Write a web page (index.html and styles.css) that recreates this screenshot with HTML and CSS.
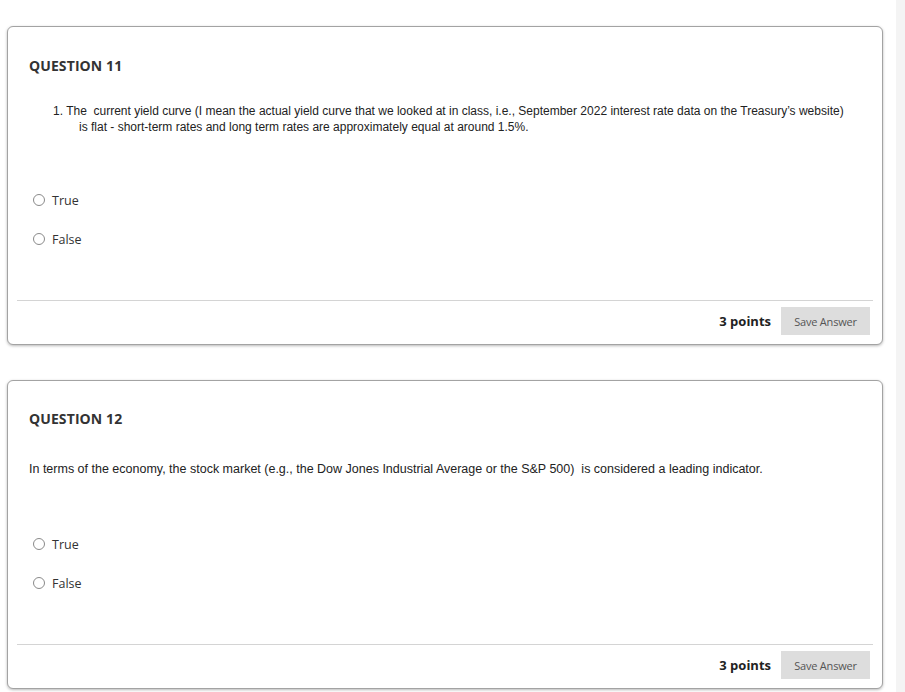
FILE: index.html
```html
<!DOCTYPE html>
<html>
<head>
<meta charset="utf-8">
<link rel="stylesheet" href="styles.css">
</head>
<body>
<div class="page">
  <div class="content">
    <div class="card card-first">
      <h3 class="qtitle">QUESTION 11</h3>
      <p class="qtext qtext-list">1. The&nbsp; current yield curve (I mean the actual yield curve that we looked at in class, i.e., September 2022 interest rate data on the Treasury’s website) is flat - short-term rates and long term rates are approximately equal at around 1.5%.</p>
      <div class="answers">
        <label class="answer"><span class="radio"></span>True</label>
        <label class="answer"><span class="radio"></span>False</label>
      </div>
      <div class="footer">
        <span class="points">3 points</span>
        <span class="save">Save Answer</span>
      </div>
    </div>
    <div class="card card-second">
      <h3 class="qtitle">QUESTION 12</h3>
      <p class="qtext qtext-plain">In terms of the economy, the stock market (e.g., the Dow Jones Industrial Average or the S&amp;P 500)&nbsp; is considered a leading indicator.</p>
      <div class="answers answers-second">
        <label class="answer"><span class="radio"></span>True</label>
        <label class="answer"><span class="radio"></span>False</label>
      </div>
      <div class="footer">
        <span class="points">3 points</span>
        <span class="save">Save Answer</span>
      </div>
    </div>
  </div>
  <div class="track"></div>
</div>
</body>
</html>
```

FILE: styles.css
```css
html, body {
  margin: 0;
  padding: 0;
  background: #ffffff;
}

.page {
  display: flex;
  width: 905px;
  height: 692px;
  overflow: hidden;
}

.content {
  width: 896px;
  padding: 26px 0 0 7px;
  box-sizing: border-box;
}

.track {
  flex: 1;
  background: #f4f4f4;
}

.card {
  width: 876px;
  box-sizing: border-box;
  border: 1px solid #a3a3a3;
  border-radius: 6px;
  box-shadow: 0 1px 3px rgba(0, 0, 0, 0.28);
  background: #fff;
  padding: 0 0 9px 0;
}

.card-second {
  margin-top: 35px;
}

.qtitle {
  margin: 0;
  padding: 29px 0 0 21px;
  font-family: "Open Sans", sans-serif;
  font-weight: 700;
  font-size: 14px;
  line-height: 20px;
  color: #333;
  letter-spacing: 0.1px;
}

.card-second .qtitle {
  padding-top: 28px;
}

.qtext {
  margin: 0;
  font-family: "Liberation Sans", Arial, sans-serif;
  font-size: 12px;
  line-height: 16px;
  color: #222;
}

.qtext-list {
  margin-top: 27px;
  padding: 0 30px 0 71px;
  text-indent: -26px;
}

.qtext-plain {
  margin-top: 32px;
  padding-left: 21px;
  font-size: 12.5px;
}

.answers {
  display: flex;
  flex-direction: column;
  gap: 19px;
  padding-left: 25px;
  margin-top: 55px;
}

.answers-second {
  margin-top: 57px;
}

.answer {
  display: flex;
  align-items: center;
  gap: 7px;
  height: 20px;
  font-family: "Open Sans", sans-serif;
  font-size: 12.5px;
  color: #333;
}

.radio {
  width: 10px;
  height: 10px;
  border: 1px solid #8a8a8a;
  border-radius: 50%;
  background: #fff;
}

.footer {
  margin: 51px 9px 0 9px;
  border-top: 1px solid #d4d4d4;
  padding-top: 6px;
  display: flex;
  justify-content: flex-end;
  align-items: center;
  gap: 10px;
  padding-right: 3px;
}

.points {
  font-family: "Open Sans", sans-serif;
  font-weight: 700;
  font-size: 13px;
  color: #222;
}

.save {
  width: 89px;
  height: 28px;
  display: flex;
  align-items: center;
  justify-content: center;
  background: #dddddd;
  font-family: "Open Sans", sans-serif;
  font-size: 11px;
  color: #555;
  letter-spacing: -0.2px;
}
```
